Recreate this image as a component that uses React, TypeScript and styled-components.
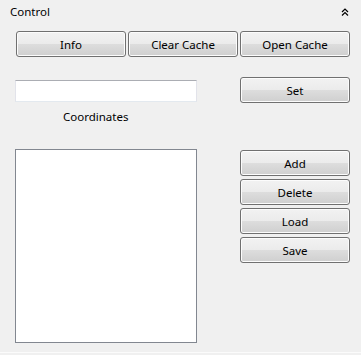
import styled, { createGlobalStyle } from "styled-components";

const GlobalStyle = createGlobalStyle`
  html, body {
    margin: 0;
    padding: 0;
    background: #f0f0f0;
  }
  body {
    font-family: "Noto Sans", "Open Sans", Arial, sans-serif;
    font-size: 11.5px;
    color: #000;
  }
`;

const Panel = styled.div`
  width: 361px;
  height: 355px;
  box-sizing: border-box;
  background: #f0f0f0;
  display: flex;
  flex-direction: column;
`;

const Header = styled.div`
  height: 24px;
  display: flex;
  align-items: center;
  justify-content: space-between;
  padding: 0 12px 0 10px;
  box-sizing: border-box;
`;

const Title = styled.span`
  font-size: 11.5px;
  line-height: 14px;
`;

const Body = styled.div`
  padding: 7px 11px 0 15px;
  display: flex;
  flex-direction: column;
  flex: 1;
  border-bottom: 1px solid #fbfbfb;
  margin-bottom: 2px;
`;

const ButtonRow = styled.div`
  display: flex;
  gap: 2px;
  margin-left: 1px;
`;

const Button = styled.button<{ $width?: number }>`
  width: ${(p) => p.$width ?? 110}px;
  height: 26px;
  box-sizing: border-box;
  padding: 0;
  border: 1px solid #707070;
  border-radius: 3px;
  box-shadow: inset 0 0 0 1px #fcfcfc;
  background: linear-gradient(
    to bottom,
    #f2f2f2 0%,
    #ebebeb 50%,
    #dddddd 51%,
    #cfcfcf 100%
  );
  font-family: "Noto Sans", "Open Sans", Arial, sans-serif;
  font-size: 11.5px;
  color: #000;
  cursor: pointer;
`;

const Grid = styled.div`
  display: grid;
  grid-template-columns: 182px 110px;
  grid-template-rows: 72px 1fr;
  column-gap: 43px;
  margin-top: 20px;
`;

const CoordCell = styled.div`
  display: flex;
  flex-direction: column;
`;

const TextBox = styled.input`
  margin-top: 3px;
  width: 182px;
  height: 22px;
  box-sizing: border-box;
  border: 1px solid #e2e3ea;
  border-top-color: #abadb3;
  border-bottom-color: #e3e9ef;
  background: #fff;
  outline: none;
  padding: 0 3px;
  font-family: "Noto Sans", "Open Sans", Arial, sans-serif;
  font-size: 11.5px;
`;

const Label = styled.span`
  margin-top: 7px;
  padding-left: 48px;
  font-size: 11.5px;
  line-height: 16px;
`;

const ListBox = styled.div`
  width: 182px;
  height: 194px;
  box-sizing: border-box;
  border: 1px solid #828790;
  background: #fff;
`;

const ButtonStack = styled.div`
  display: flex;
  flex-direction: column;
  gap: 3px;
  margin-top: 1px;
`;

const Collapse = () => (
  <svg width="8" height="8" viewBox="0 0 8 8">
    <polyline points="1,4 4,1 7,4" fill="none" stroke="#000" strokeWidth="1.2" />
    <polyline points="1,7.5 4,4.5 7,7.5" fill="none" stroke="#000" strokeWidth="1.2" />
  </svg>
);

export default function App() {
  return (
    <>
      <GlobalStyle />
      <Panel>
        <Header>
          <Title>Control</Title>
          <Collapse />
        </Header>
        <Body>
          <ButtonRow>
            <Button>Info</Button>
            <Button>Clear Cache</Button>
            <Button>Open Cache</Button>
          </ButtonRow>
          <Grid>
            <CoordCell>
              <TextBox />
              <Label>Coordinates</Label>
            </CoordCell>
            <div>
              <Button>Set</Button>
            </div>
            <ListBox />
            <ButtonStack>
              <Button>Add</Button>
              <Button>Delete</Button>
              <Button>Load</Button>
              <Button>Save</Button>
            </ButtonStack>
          </Grid>
        </Body>
      </Panel>
    </>
  );
}
